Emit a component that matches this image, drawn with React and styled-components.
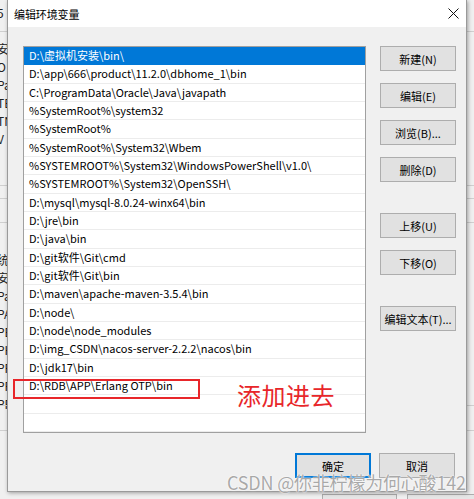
import React from 'react';
import styled, { createGlobalStyle } from 'styled-components';

const Global = createGlobalStyle`
  html, body { margin: 0; padding: 0; background: #f0f0f0; }
  body { font-family: "Noto Sans CJK SC", "Noto Sans", sans-serif; }
  #root { width: 474px; height: 499px; }
`;

const Screen = styled.div`
  position: relative;
  width: 474px;
  height: 499px;
  overflow: hidden;
  box-sizing: border-box;
  padding-left: 7px;
  background: #f2f2f2;
`;

/* ---------- window behind the dialog (a window on the desktop) ---------- */
const BackWindow = styled.div`
  position: absolute;
  inset: 0;
  z-index: 0;
  background: #f0f0f0;
`;

const BackColumn = styled.div`
  position: absolute;
  left: -3px;
  top: ${p => p.$top}px;
  display: flex;
  flex-direction: column;
  font-size: 12px;
  color: #222;
`;

const BackItem = styled.div`
  height: 18px;
  line-height: 18px;
  white-space: nowrap;
`;

const BackLine = styled.div`
  position: absolute;
  left: 0;
  right: 0;
  top: ${p => p.$top}px;
  height: 1px;
  background: #cfcfcf;
`;

const BackButtons = styled.div`
  position: absolute;
  left: 322px;
  top: 494px;
  display: flex;
  gap: 10px;
`;

const BackButton = styled.div`
  width: 75px;
  height: 20px;
  box-sizing: border-box;
  border: 1px solid #adadad;
  background: #e6e6e6;
`;

/* ---------------------------- the dialog ---------------------------- */
const Dialog = styled.div`
  position: relative;
  z-index: 1;
  width: 460px;
  height: 492px;
  box-sizing: border-box;
  border: 1px solid #9a9a9a;
  border-top: none;
  background: #f0f0f0;
  box-shadow: 1px 1px 4px rgba(0, 0, 0, 0.35);
  display: flex;
  flex-direction: column;
`;

const TitleBar = styled.div`
  height: 27px;
  flex: none;
  background: #ffffff;
  display: flex;
  align-items: center;
  justify-content: space-between;
  padding-left: 6px;
`;

const Title = styled.div`
  font-size: 11px;
  color: #000;
  letter-spacing: -0.1px;
`;

const CloseBtn = styled.div`
  width: 26px;
  height: 27px;
  display: flex;
  align-items: center;
  justify-content: center;
`;

const Body = styled.div`
  display: flex;
  gap: 14px;
  padding: 19px 0 0 15px;
`;

const ListBox = styled.div`
  width: 343px;
  height: 387px;
  flex: none;
  box-sizing: border-box;
  border: 1px solid #a0a0a0;
  background: #fff;
  overflow: hidden;
`;

const Row = styled.div`
  height: 18.33px;
  box-sizing: border-box;
  border-bottom: 1px solid ${p => (p.$selected ? '#0078d7' : '#ececec')};
  background: ${p => (p.$selected ? '#0078d7' : '#fff')};
  color: ${p => (p.$selected ? '#fff' : '#000')};
  font-size: 11px;
  line-height: 17px;
  padding-left: 5px;
  white-space: nowrap;
  overflow: hidden;
`;

const SideButtons = styled.div`
  width: 76px;
  display: flex;
  flex-direction: column;
  gap: 12px;
`;

const Button = styled.div`
  width: 76px;
  height: 25px;
  flex: none;
  box-sizing: border-box;
  border: 1px solid ${p => (p.$default ? '#0078d7' : '#adadad')};
  box-shadow: ${p => (p.$default ? 'inset 0 0 0 1px #0078d7' : 'none')};
  background: #e1e1e1;
  display: flex;
  align-items: center;
  justify-content: center;
  font-size: 11px;
  color: #000;
  white-space: nowrap;
  margin-top: ${p => (p.$groupStart ? '19px' : '0')};
`;

const Footer = styled.div`
  display: flex;
  justify-content: flex-end;
  gap: 8px;
  padding: 20px 11px 0 0;
`;

/* ---------------------------- overlays ---------------------------- */
const RedBox = styled.div`
  position: absolute;
  z-index: 2;
  left: 13px;
  top: 379px;
  width: 187px;
  height: 20px;
  box-sizing: border-box;
  border: 2px solid #e8262a;
`;

const RedNote = styled.div`
  position: absolute;
  z-index: 2;
  left: 237px;
  top: 382px;
  font-size: 24px;
  line-height: 26px;
  color: #e8262a;
  letter-spacing: 0.5px;
`;

const Watermark = styled.div`
  position: absolute;
  z-index: 3;
  left: 227px;
  top: 471px;
  font-family: "Noto Sans CJK SC", sans-serif;
  font-size: 18px;
  line-height: 22px;
  color: rgba(140, 140, 140, 0.75);
  text-shadow: 0 0 1px #fff, 0 0 2px #fff;
  white-space: nowrap;
  letter-spacing: -0.2px;
`;

const paths = [
  'D:\\虚拟机安装\\bin\\',
  'D:\\app\\666\\product\\11.2.0\\dbhome_1\\bin',
  'C:\\ProgramData\\Oracle\\Java\\javapath',
  '%SystemRoot%\\system32',
  '%SystemRoot%',
  '%SystemRoot%\\System32\\Wbem',
  '%SYSTEMROOT%\\System32\\WindowsPowerShell\\v1.0\\',
  '%SYSTEMROOT%\\System32\\OpenSSH\\',
  'D:\\mysql\\mysql-8.0.24-winx64\\bin',
  'D:\\jre\\bin',
  'D:\\java\\bin',
  'D:\\git软件\\Git\\cmd',
  'D:\\git软件\\Git\\bin',
  'D:\\maven\\apache-maven-3.5.4\\bin',
  'D:\\node\\',
  'D:\\node\\node_modules',
  'D:\\img_CSDN\\nacos-server-2.2.2\\nacos\\bin',
  'D:\\jdk17\\bin',
  'D:\\RDB\\APP\\Erlang OTP\\bin',
  '',
  '',
];

const sideButtons = [
  { label: '新建(N)' },
  { label: '编辑(E)' },
  { label: '浏览(B)...' },
  { label: '删除(D)' },
  { label: '上移(U)', groupStart: true },
  { label: '下移(O)' },
  { label: '编辑文本(T)...', groupStart: true },
];

const backTop = ['5', '', '安', 'O', 'Pa', 'TE', 'TN', 'V'];
const backBottom = ['统', '安', 'Pa', 'PA', 'PE', 'PH', 'PF', 'PF', 'PF'];

export default function App() {
  return (
    <>
      <Global />
      <Screen>
        <BackWindow>
          <BackColumn $top={4}>
            {backTop.map((t, i) => (
              <BackItem key={i}>{t}</BackItem>
            ))}
          </BackColumn>
          <BackColumn $top={251}>
            {backBottom.map((t, i) => (
              <BackItem key={i}>{t}</BackItem>
            ))}
          </BackColumn>
          <BackLine $top={31} />
          <BackLine $top={185} />
          <BackLine $top={198} />
          <BackLine $top={222} />
          <BackLine $top={405} />
          <BackLine $top={430} />
          <BackButtons>
            <BackButton />
            <BackButton />
          </BackButtons>
        </BackWindow>

        <Dialog>
          <TitleBar>
            <Title>编辑环境变量</Title>
            <CloseBtn>
              <svg width="11" height="11" viewBox="0 0 11 11">
                <path d="M0.5 0.5 L10.5 10.5 M10.5 0.5 L0.5 10.5" stroke="#111" strokeWidth="1" fill="none" />
              </svg>
            </CloseBtn>
          </TitleBar>
          <Body>
            <ListBox>
              {paths.map((p, i) => (
                <Row key={i} $selected={i === 0}>
                  {p}
                </Row>
              ))}
            </ListBox>
            <SideButtons>
              {sideButtons.map(b => (
                <Button key={b.label} $groupStart={b.groupStart}>
                  {b.label}
                </Button>
              ))}
            </SideButtons>
          </Body>
          <Footer>
            <Button $default>确定</Button>
            <Button>取消</Button>
          </Footer>
        </Dialog>

        <RedBox />
        <RedNote>添加进去</RedNote>
        <Watermark>CSDN @你非柠檬为何心酸142</Watermark>
      </Screen>
    </>
  );
}
